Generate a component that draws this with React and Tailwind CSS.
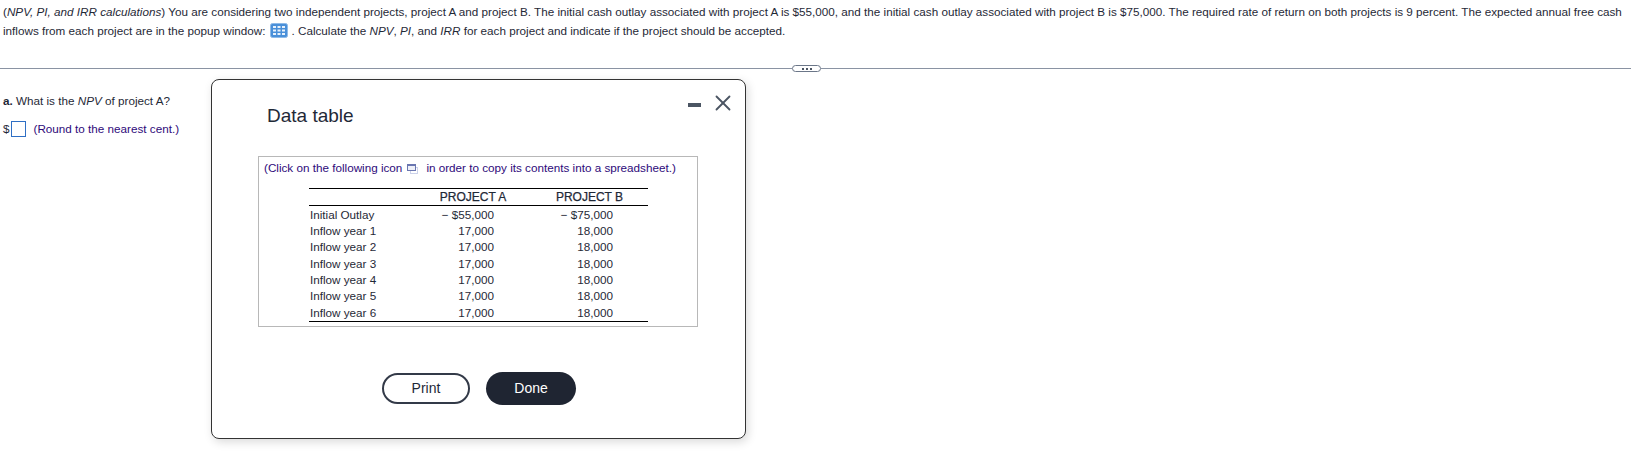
import { X } from "lucide-react";

const rows = [
  ["Initial Outlay", "− $55,000", "− $75,000", "h-[16px]"],
  ["Inflow year 1", "17,000", "18,000", "h-[16px]"],
  ["Inflow year 2", "17,000", "18,000", "h-[17px]"],
  ["Inflow year 3", "17,000", "18,000", "h-[16px]"],
  ["Inflow year 4", "17,000", "18,000", "h-[16px]"],
  ["Inflow year 5", "17,000", "18,000", "h-[17px]"],
  ["Inflow year 6", "17,000", "18,000", "h-[17px]"],
];

function GridIcon() {
  return (
    <svg width="18" height="15" viewBox="0 0 18 15" className="ml-[5px] mr-[3px] inline-block align-[-3px]">
      <rect x="0.5" y="0.5" width="17" height="14" rx="2" fill="#4a90d9" stroke="#8fbbe8" />
      {[3, 6.5, 10].map((y) =>
        [3, 7.5, 12].map((x) => (
          <rect key={`${x}-${y}`} x={x} y={y} width="3" height="2" fill="#e8f2fc" />
        ))
      )}
    </svg>
  );
}

function CopyIcon() {
  return (
    <svg width="11" height="10" viewBox="0 0 11 10" className="ml-[5px] mr-[8px] inline-block align-[-2px]">
      <rect x="3.5" y="3.5" width="7" height="6" fill="none" stroke="#ccd2ea" />
      <rect x="0.5" y="0.5" width="8" height="6" fill="#eef0f8" stroke="#6a76b0" />
      <rect x="1" y="1" width="7" height="1" fill="#6a76b0" />
    </svg>
  );
}

export default function App() {
  return (
    <div className="relative h-[468px] w-[1631px] overflow-hidden bg-white font-['Liberation_Sans',Arial,sans-serif] text-[11.7px] text-[#1f2937]">
      {/* Question text */}
      <div className="pl-[3px] pt-[2px] leading-[19px] whitespace-nowrap">
        <p>
          (<i>NPV, PI, and IRR calculations</i>) You are considering two independent projects, project A and project B. The initial cash outlay associated with project A is $55,000, and the initial cash outlay associated with project B is $75,000. The required rate of return on both projects is 9 percent. The expected annual free cash
        </p>
        <p>
          inflows from each project are in the popup window:
          <GridIcon />. Calculate the <i>NPV</i>, <i>PI</i>, and <i>IRR</i> for each project and indicate if the project should be accepted.
        </p>
      </div>

      {/* Divider with handle */}
      <div className="mt-[25px] flex items-center">
        <div className="h-px flex-1 bg-[#8a93a3]" />
        <div className="flex h-[7px] w-[29px] items-center justify-center gap-[2px] rounded-full border border-[#6b7688] bg-white">
          <span className="h-[2px] w-[2px] bg-[#4b5563]" />
          <span className="h-[2px] w-[2px] bg-[#4b5563]" />
          <span className="h-[2px] w-[2px] bg-[#4b5563]" />
        </div>
        <div className="h-px w-[810px] bg-[#8a93a3]" />
      </div>

      {/* Part a */}
      <div className="pl-[3px] pt-[21px]">
        <p className="leading-[16px]">
          <b>a.</b> What is the <i>NPV</i> of project A?
        </p>
        <div className="mt-[11px] flex items-center">
          <span>$</span>
          <span className="ml-[1px] h-[16px] w-[15px] border border-[#2f6fc4]" />
          <span className="ml-[8px] text-[#2e0a7a]">(Round to the nearest cent.)</span>
        </div>
      </div>

      {/* Popup */}
      <div className="absolute left-[211px] top-[79px] h-[360px] w-[535px] rounded-[8px] border border-[#333] bg-white shadow-[2px_3px_10px_rgba(0,0,0,0.15)]">
        <div className="flex h-[76px] items-start justify-between pl-[55px] pr-[9px] pt-[25px]">
          <h2 className="text-[19px] leading-[22px]">Data table</h2>
          <div className="-mt-[15px] flex items-center gap-[9px]">
            <span className="mt-[4px] h-[4px] w-[13px] bg-[#4b5563]" />
            <X className="h-[26px] w-[26px] text-[#4b5563]" strokeWidth={1.7} />
          </div>
        </div>

        <div className="ml-[46px] h-[171px] w-[440px] border border-[#b8b8b8] px-[5px] pt-[4px]">
          <p className="leading-[14px] text-[#2e0a7a]">
            (Click on the following icon
            <CopyIcon />
            in order to copy its contents into a spreadsheet.)
          </p>
          <div className="ml-[45px] mt-[13px] w-[339px] border-y border-black">
            <div className="flex h-[17px] items-center border-b border-black text-[12px] font-medium [-webkit-text-stroke:0.25px]">
              <span className="w-[106px]" />
              <span className="w-[116px] text-center">PROJECT A</span>
              <span className="w-[117px] text-center">PROJECT B</span>
            </div>
            {rows.map(([label, a, b, h]) => (
              <div key={label} className={`flex items-start pl-[1px] pt-px leading-[16px] ${h}`}>
                <span className="w-[130px]">{label}</span>
                <span className="w-[54px] whitespace-nowrap text-right">{a}</span>
                <span className="ml-[66px] w-[53px] whitespace-nowrap text-right">{b}</span>
              </div>
            ))}
          </div>
        </div>

        <div className="ml-[170px] mt-[45px] flex items-center gap-[16px] text-[14px]">
          <button className="h-[31px] w-[88px] rounded-full border-2 border-[#333a48] bg-white">Print</button>
          <button className="h-[33px] w-[90px] rounded-full bg-[#1f2532] text-white">Done</button>
        </div>
      </div>
    </div>
  );
}
